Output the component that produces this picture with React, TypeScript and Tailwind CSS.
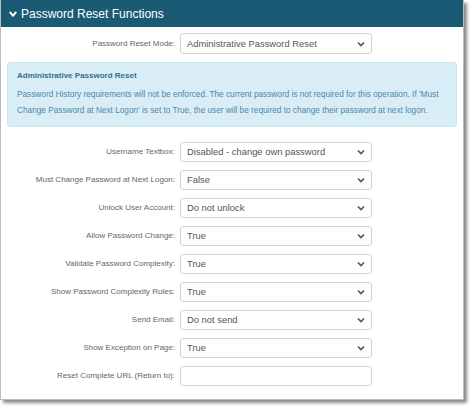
import React from "react";

const rows: { label: string; value: string; input?: boolean }[] = [
  { label: "Username Textbox:", value: "Disabled - change own password" },
  { label: "Must Change Password at Next Logon:", value: "False" },
  { label: "Unlock User Account:", value: "Do not unlock" },
  { label: "Allow Password Change:", value: "True" },
  { label: "Validate Password Complexity:", value: "True" },
  { label: "Show Password Complexity Rules:", value: "True" },
  { label: "Send Email:", value: "Do not send" },
  { label: "Show Exception on Page:", value: "True" },
  { label: "Reset Complete URL (Return to):", value: "", input: true },
];

function Chevron() {
  return (
    <svg width="8" height="6" viewBox="0 0 8 6" className="shrink-0">
      <path d="M1 1.5 L4 4.5 L7 1.5" fill="none" stroke="#555" strokeWidth="1.6" />
    </svg>
  );
}

function Select({ value, input, h = "h-[20px]" }: { value: string; input?: boolean; h?: string }) {
  return (
    <div
      className={`w-[192px] ${h} border border-[#d4d4d4] rounded-[3px] bg-white flex items-center pl-[6px] pr-[6px] text-[9.4px] text-[#555]`}
    >
      <span className="flex-1 truncate leading-none">{value}</span>
      {!input && <Chevron />}
    </div>
  );
}

function Row({ label, children }: { label: string; children: React.ReactNode }) {
  return (
    <div className="flex items-center">
      <div className="w-[173px] text-right pr-[5px] text-[8px] text-[#666] leading-none">{label}</div>
      {children}
    </div>
  );
}

export default function App() {
  return (
    <div
      className="w-[474px] h-[410px] bg-white relative overflow-hidden"
      style={{ fontFamily: '"Liberation Sans", Arial, sans-serif' }}
    >
      <div className="w-[464px] h-[400px] bg-white border-l border-r border-b border-[#bdbdbd] shadow-[3px_3px_3px_rgba(0,0,0,0.45)] flex flex-col">
        <div className="h-[27px] bg-[#1b5a74] flex items-center pl-[8px]">
          <svg width="8" height="6" viewBox="0 0 8 6" className="mr-[4px]">
            <path d="M0.8 1 L4 4.6 L7.2 1" fill="none" stroke="#fff" strokeWidth="2" />
          </svg>
          <span className="text-white text-[12px] leading-none">Password Reset Functions</span>
        </div>
        <div className="flex flex-col pt-[6px] px-[6px]">
          <Row label="Password Reset Mode:">
            <Select value="Administrative Password Reset" h="h-[21px]" />
          </Row>
          <div className="mt-[8px] bg-[#d9edf7] border border-[#c6e6f1] rounded-[3px] pt-[7px] pb-[7px] px-[9px] text-[#31708f]">
            <div className="text-[8px] font-bold leading-[12px]">Administrative Password Reset</div>
            <div className="mt-[5px] text-[8.25px] leading-[16px] text-[#4d87a8]">
              Password History requirements will not be enforced. The current password is not required for this operation. If 'Must
              Change Password at Next Logon' is set to True, the user will be required to change their password at next logon.
            </div>
          </div>
          <div className="mt-[15px] flex flex-col gap-[8px]">
            {rows.map((r) => (
              <Row key={r.label} label={r.label}>
                <Select value={r.value} input={r.input} />
              </Row>
            ))}
          </div>
        </div>
      </div>
    </div>
  );
}
